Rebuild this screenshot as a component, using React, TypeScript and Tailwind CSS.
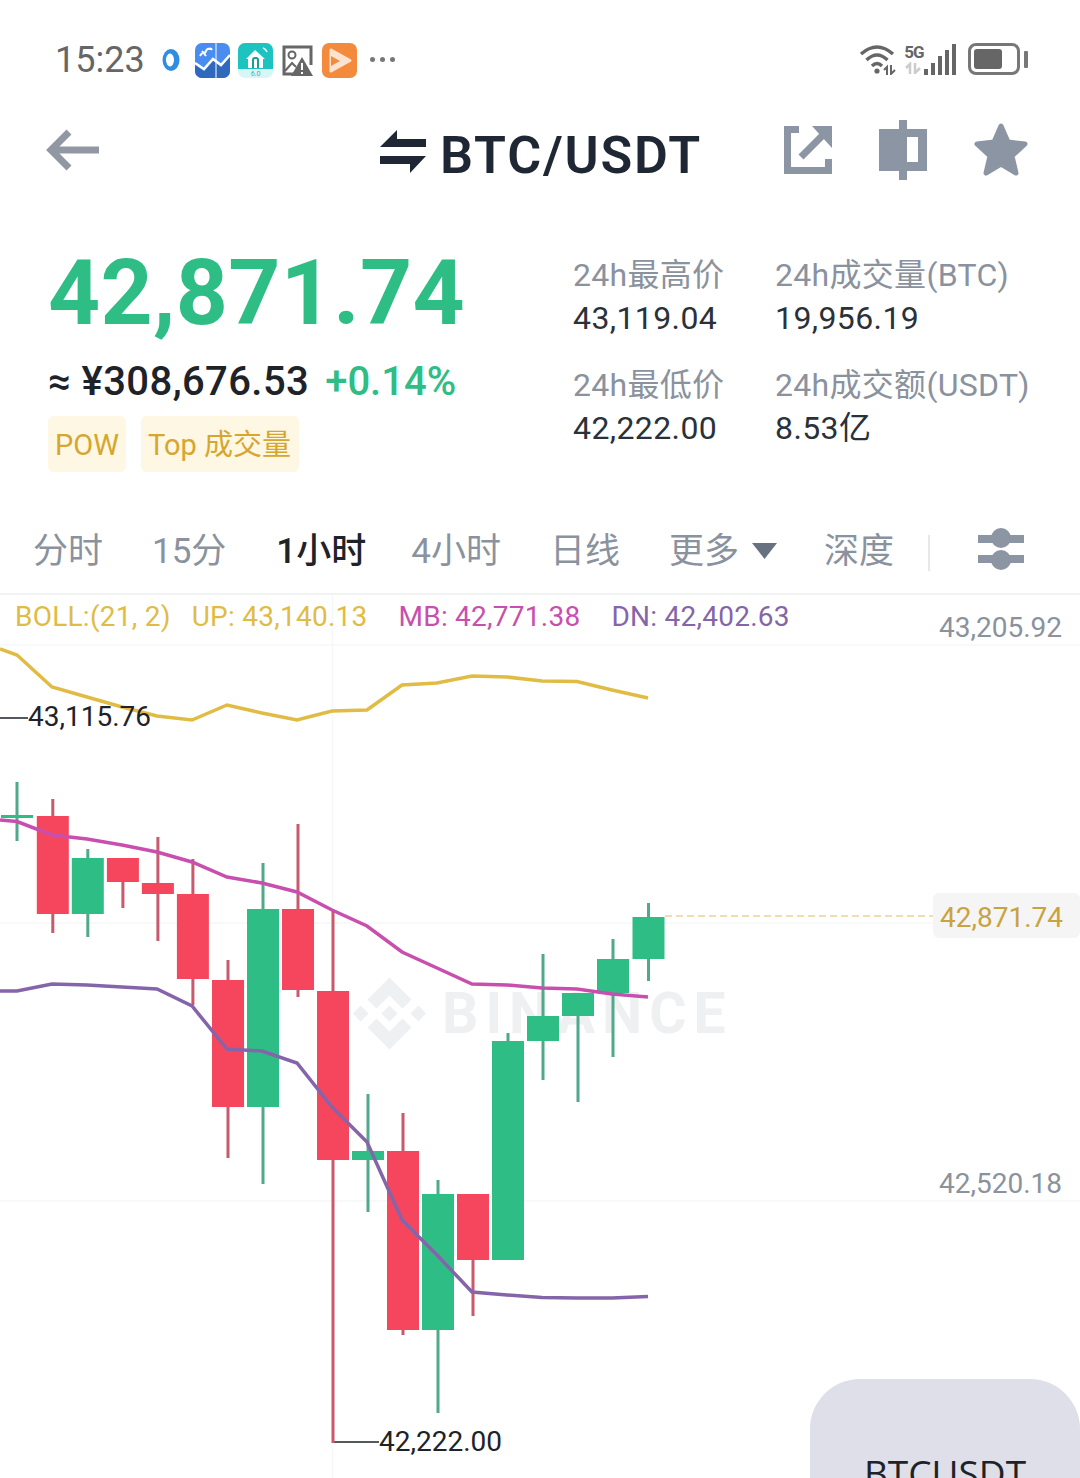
const candles = [
  { x: 17, hi: 782, lo: 841, top: 815, bot: 818, up: true },
  { x: 52.8, hi: 799, lo: 933, top: 816, bot: 914, up: false },
  { x: 87.8, hi: 849, lo: 937, top: 858, bot: 914, up: true },
  { x: 122.9, hi: 858, lo: 908, top: 858, bot: 882, up: false },
  { x: 157.9, hi: 837, lo: 941, top: 883, bot: 894, up: false },
  { x: 192.9, hi: 859, lo: 1005, top: 894, bot: 979, up: false },
  { x: 228, hi: 960, lo: 1158, top: 980, bot: 1107, up: false },
  { x: 263, hi: 863, lo: 1184, top: 909, bot: 1107, up: true },
  { x: 298, hi: 824, lo: 997, top: 909, bot: 990, up: false },
  { x: 333, hi: 910, lo: 1443, top: 991, bot: 1160, up: false },
  { x: 368, hi: 1094, lo: 1212, top: 1151, bot: 1160, up: true },
  { x: 403, hi: 1113, lo: 1335, top: 1151, bot: 1330, up: false },
  { x: 438, hi: 1180, lo: 1413, top: 1194, bot: 1330, up: true },
  { x: 473, hi: 1194, lo: 1316, top: 1194, bot: 1260, up: false },
  { x: 508, hi: 1033, lo: 1260, top: 1041, bot: 1260, up: true },
  { x: 543, hi: 954, lo: 1080, top: 1016, bot: 1041, up: true },
  { x: 578, hi: 993, lo: 1102, top: 993, bot: 1016, up: true },
  { x: 613, hi: 939, lo: 1057, top: 959, bot: 993, up: true },
  { x: 648.5, hi: 903, lo: 981, top: 917, bot: 959, up: true },
];

const bollUp =
  "0,649 17,655 52,687 87,697 122,707 157,716 192,720 227,705 262,713 297,720 332,711 367,710 402,685 437,683 472,676 507,677 542,681 577,681.5 612,690 648,698";
const bollMid =
  "0,820 17,821.5 52,835 87,839 122,845 157,852 192,862 227,877 262,883 297,892 332,910 367,926 402,952 437,968 472,984 507,985 542,988 577,989 612,994 648,997";
const bollDn =
  "0,991 17,991 52,984 87,985 122,987 157,989 192,1006 227,1049 262,1051 297,1063 332,1107 367,1142 402,1220 437,1255 472,1292 507,1295 542,1297.5 577,1298 612,1298 648,1296.5";

function AppIcons() {
  return (
    <div className="flex items-center ml-[17px]">
      <svg width="18" height="24" viewBox="0 0 18 24">
        <ellipse cx="9" cy="12" rx="8.5" ry="11" fill="#2f8de4" />
        <ellipse cx="8" cy="12" rx="4" ry="6.5" fill="#fff" />
      </svg>
      <svg width="35" height="35" viewBox="0 0 35 35" className="ml-[15px]">
        <rect width="35" height="35" rx="7" fill="#4a8cf0" />
        <path d="M0 22 L9 28 L18 18 L26 24 L35 14 V28 a7 7 0 0 1 -7 7 H7 a7 7 0 0 1 -7 -7Z" fill="#2f69bd" />
        <path d="M0 20 L9 26 L18 16 L26 22 L35 12" fill="none" stroke="#fff" stroke-width="2.5" />
        <path d="M21 0 V35" stroke="#fff" stroke-width="1" />
        <path d="M5 13 q3 -5 5 -3 q2 -5 4 -4 q2 -1 3 1 M7 8 l4 5" fill="none" stroke="#fff" stroke-width="2" />
      </svg>
      <svg width="35" height="35" viewBox="0 0 35 35" className="ml-[8px]">
        <rect width="35" height="35" rx="7" fill="#d9f6f6" />
        <path d="M0 7 a7 7 0 0 1 7 -7 H28 a7 7 0 0 1 7 7 V26 H0Z" fill="#1cc3bf" />
        <path d="M17 7 L27 16 H25 V25 H10 V16 H8Z" fill="#fff" />
        <path d="M15 25 V17 a2 2 0 0 1 2 -2 h1 a2 2 0 0 1 2 2 V25" fill="none" stroke="#1a9c99" stroke-width="2" />
        <path d="M25 5 q3 1 4 4" fill="none" stroke="#fff" stroke-width="1.5" />
        <text x="17.5" y="33" fontSize="7" textAnchor="middle" fill="#35b8b5" fontFamily="Roboto, sans-serif">
          6.0
        </text>
      </svg>
      <svg width="31" height="31" viewBox="0 0 31 31" className="ml-[9px]">
        <path d="M18 29 H2 V2 H29 V20" fill="none" stroke="#666" stroke-width="3" />
        <circle cx="10" cy="10" r="3.5" fill="none" stroke="#666" stroke-width="2" />
        <path d="M3 26 L10 18 L14 22" fill="none" stroke="#666" stroke-width="2" />
        <path d="M20 12 L31 31 H9Z" fill="#666" />
        <path d="M20 18 V25 M20 27 V29" stroke="#fff" stroke-width="2" />
      </svg>
      <svg width="35" height="35" viewBox="0 0 35 35" className="ml-[9px]">
        <rect width="35" height="35" rx="7" fill="#f48a3c" />
        <path d="M9 7 L28 17.5 L9 28Z" fill="#fde3cf" stroke="#fde3cf" stroke-width="3" stroke-linejoin="round" />
        <path d="M9 13 L18 18 L9 23Z" fill="#f48a3c" />
      </svg>
      <div className="flex gap-[5px] ml-[13px] -mt-[2px]">
        <div className="w-[5px] h-[5px] rounded-full bg-[#777]" />
        <div className="w-[5px] h-[5px] rounded-full bg-[#777]" />
        <div className="w-[5px] h-[5px] rounded-full bg-[#777]" />
      </div>
    </div>
  );
}

function SystemIcons() {
  return (
    <div className="flex items-center -mt-[2px]">
      <svg width="38" height="32" viewBox="0 0 38 32">
        <path d="M2 11 Q18 -3 34 11" fill="none" stroke="#666" stroke-width="3.5" />
        <path d="M7.5 17 Q18 7 28.5 17" fill="none" stroke="#666" stroke-width="3.5" />
        <path d="M13 23 Q18 18 23 23" fill="none" stroke="#666" stroke-width="3.5" />
        <circle cx="18" cy="28" r="2.6" fill="#666" />
        <path d="M28 32 V24 L25 27 M32 22 V31 L36 27" fill="none" stroke="#666" stroke-width="2" />
      </svg>
      <div className="flex flex-col items-center ml-[8px] w-[18px]">
        <span className="text-[17px] leading-[17px] font-bold text-[#666] tracking-[-1px]">5G</span>
        <svg width="18" height="12" viewBox="0 0 18 12" className="mt-[1px]">
          <path d="M5 12 V2 L1 6 M10 1 V11 L15 6" fill="none" stroke="#ccc" stroke-width="2.5" />
        </svg>
      </div>
      <div className="flex items-end gap-[3px] h-[31px] ml-[1px]">
        <div className="w-[4px] h-[6px] bg-[#666]" />
        <div className="w-[4px] h-[12px] bg-[#666]" />
        <div className="w-[4px] h-[19px] bg-[#666]" />
        <div className="w-[4px] h-[25px] bg-[#666]" />
        <div className="w-[4px] h-[31px] bg-[#666]" />
      </div>
      <div className="flex items-center ml-[12px]">
        <div className="w-[52px] h-[32px] rounded-[8px] border-[3px] border-[#777] p-[3px] flex">
          <div className="w-[28px] h-full rounded-[3px] bg-[#666]" />
        </div>
        <div className="w-[4px] h-[17px] rounded-[1px] bg-[#777] ml-[4px]" />
      </div>
    </div>
  );
}

function NavBar() {
  return (
    <div className="h-[64px] flex items-center pl-[45px] pr-[52px]">
      <svg width="54" height="42" viewBox="0 0 54 42" className="-mt-[4px]">
        <path d="M54 21 H7 M24 3 L6 21 L24 39" fill="none" stroke="#9298a3" stroke-width="7" />
      </svg>
      <svg width="46" height="43" viewBox="380 133 46 43" className="ml-[281px] -mt-[2px]">
        <path d="M380 150 L397 133 V142 H426 V150Z M380 159 H426 L410 176 V167 H380Z" fill="#1e2733" />
      </svg>
      <span className="ml-[14px] mt-[8px] text-[52px] leading-none font-semibold text-[#1e2733] tracking-[1.8px]">BTC/USDT</span>
      <div className="ml-auto flex items-center gap-[47px] -mt-[4px]">
        <svg width="48" height="48" viewBox="783 126 48 48">
          <path d="M783 126 H798 V133 H790 V167 H824 V159 H831 V174 H783Z M811 126 H831 V148Z" fill="#8b95a3" />
          <path d="M823 134 L800 157" fill="none" stroke="#8b95a3" stroke-width="7" />
        </svg>
        <svg width="48" height="60" viewBox="879 120 48 60">
          <path d="M899 120 H907 V129 H927 V171 H907 V180 H899 V171 H879 V129 H899Z" fill="#8b95a3" />
          <rect x="907" y="137" width="11" height="25" fill="#fff" />
        </svg>
        <svg width="54" height="54" viewBox="0 0 54 54">
          <path
            d="M27 3 L34 19 L51 21 L38 33 L42 50 L27 41 L12 50 L16 33 L3 21 L20 19Z"
            fill="#8b95a3"
            stroke="#8b95a3"
            stroke-width="5"
            stroke-linejoin="round"
          />
        </svg>
      </div>
    </div>
  );
}

function Stat({ label, value }: { label: string; value: string }) {
  return (
    <div className="flex flex-col">
      <span className="text-[32px] leading-[44px] tracking-[0.3px] text-[#8a929e] whitespace-nowrap">{label}</span>
      <span className="text-[32px] leading-[42px] text-[#2b3139] tracking-[0.4px] whitespace-nowrap">{value}</span>
    </div>
  );
}

function MarketInfo() {
  return (
    <div className="h-[336px] flex">
      <div className="w-[573px] pl-[48px] pt-[54px]">
        <div className="text-[91px] leading-[110px] font-bold text-[#2ebd85] tracking-[0.3px]">42,871.74</div>
        <div className="flex items-center mt-[7px] h-[54px]">
          <span className="text-[40px] leading-none font-medium text-[#1e2329] tracking-[0.4px]">≈ ¥308,676.53</span>
          <span className="text-[40px] leading-none font-medium text-[#2ebd85] ml-[16px]">+0.14%</span>
        </div>
        <div className="flex gap-[15px] mt-[7px]">
          <div className="h-[56px] px-[7px] pt-[3px] flex items-center rounded-[6px] bg-[#fdf7e3] text-[29px] text-[#d6a62f]">POW</div>
          <div className="h-[56px] px-[7px] pt-[3px] pr-[8px] flex items-center rounded-[6px] bg-[#fdf7e3] text-[29px] text-[#d6a62f]">
            Top 成交量
          </div>
        </div>
      </div>
      <div className="pt-[69px] flex flex-col gap-[24px]">
        <div className="flex">
          <div className="w-[202px]">
            <Stat label="24h最高价" value="43,119.04" />
          </div>
          <Stat label="24h成交量(BTC)" value="19,956.19" />
        </div>
        <div className="flex">
          <div className="w-[202px]">
            <Stat label="24h最低价" value="42,222.00" />
          </div>
          <Stat label="24h成交额(USDT)" value="8.53亿" />
        </div>
      </div>
    </div>
  );
}

function Tabs() {
  return (
    <div className="h-[75px] flex items-center pl-[33px] pb-[8px] border-b-2 border-[#f1f2f4] text-[35px] text-[#8a929e] whitespace-nowrap">
      <span>分时</span>
      <span className="ml-[49px]">15分</span>
      <span className="ml-[50px] font-medium text-[#1e2329]">1小时</span>
      <span className="ml-[45px]">4小时</span>
      <span className="ml-[49px]">日线</span>
      <span className="ml-[49px]">更多</span>
      <svg width="25" height="16" viewBox="0 0 25 16" className="ml-[13px] -mt-[4px]">
        <path d="M0 0 H25 L12.5 16Z" fill="#67717f" />
      </svg>
      <span className="ml-[47px]">深度</span>
      <div className="w-[2px] h-[36px] bg-[#e6e8ea] ml-[34px]" />
      <svg width="46" height="44" viewBox="0 0 46 44" className="ml-[48px] -mt-[8px]">
        <rect y="8" width="46" height="8" fill="#8b95a3" />
        <rect y="28" width="46" height="8" fill="#8b95a3" />
        <circle cx="23" cy="11" r="10" fill="#8b95a3" />
        <circle cx="23" cy="33" r="10" fill="#8b95a3" />
      </svg>
    </div>
  );
}

function Chart() {
  return (
    <div className="relative flex-1 overflow-hidden">
      {/* watermark sits under the candles */}
      <div className="absolute left-[353px] top-[382px] flex items-center">
        <svg width="73" height="73" viewBox="-36.5 -36.5 73 73">
          <path
            d="M0 -36 L22 -14 L13 -5 L0 -18 L-13 -5 L-22 -14Z M0 36 L22 14 L13 5 L0 18 L-13 5 L-22 14Z M0 -8 L8 0 L0 8 L-8 0Z M-29 -8 L-21 0 L-29 8 L-36.5 0Z M29 -8 L36.5 0 L29 8 L21 0Z"
            fill="#eef0f1"
          />
        </svg>
        <span className="ml-[16px] text-[57px] leading-none font-bold tracking-[7px] text-[#eef0f1]">BINANCE</span>
      </div>

      <svg className="absolute inset-0" width="1080" height="883" viewBox="0 595 1080 883">
        <path d="M0 645 H1080 M0 923 H1080 M0 1201 H1080 M332.5 595 V1478" stroke="#f6f7f8" stroke-width="1.5" fill="none" />
        <path d="M665 916 H933" stroke="#f0dfae" stroke-width="2" strokeDasharray="7 4" fill="none" />
        <path d="M0 718 H28 M333 1442 H379" stroke="#1e2329" stroke-width="1.5" fill="none" />
        {candles.map((c) => (
          <g key={c.x}>
            <rect x={c.x - 1.5} y={c.hi} width="3" height={c.lo - c.hi} fill={c.up ? "#4fa98a" : "#c9596c"} />
            <rect x={c.x - 16} y={c.top} width="32" height={c.bot - c.top} fill={c.up ? "#2ebd85" : "#f6465d"} />
          </g>
        ))}
        <polyline points={bollUp} fill="none" stroke="#e0bc45" stroke-width="3.5" />
        <polyline points={bollMid} fill="none" stroke="#c84fae" stroke-width="3.5" />
        <polyline points={bollDn} fill="none" stroke="#8565a9" stroke-width="3.5" />
      </svg>

      {/* legend */}
      <div className="absolute left-[15px] top-[2px] flex items-center text-[28px] leading-[40px] tracking-[0.25px] whitespace-nowrap">
        <span className="text-[#e0bc45]">BOLL:(21, 2)</span>
        <span className="ml-[21px] text-[#e0bc45]">UP: 43,140.13</span>
        <span className="ml-[31px] text-[#c84fae]">MB: 42,771.38</span>
        <span className="ml-[31px] text-[#8565a9]">DN: 42,402.63</span>
      </div>

      {/* price labels */}
      <span className="absolute left-[28px] top-[104px] text-[28px] leading-[36px] text-[#1e2329]">43,115.76</span>
      <span className="absolute left-[379px] top-[829px] text-[28px] leading-[36px] text-[#1e2329]">42,222.00</span>
      <span className="absolute right-[18px] top-[15px] text-[28px] leading-[36px] text-[#8a929e]">43,205.92</span>
      <span className="absolute right-[18px] top-[571px] text-[28px] leading-[36px] text-[#8a929e]">42,520.18</span>
      <div className="absolute left-[933px] right-0 top-[298px] h-[45px] pl-[7px] pt-[5px] flex items-center rounded-[6px] bg-[#f5f5f5] text-[28px] text-[#c9a33d]">
        42,871.74
      </div>

      {/* floating symbol card, cut off by the bottom edge */}
      <div className="absolute left-[810px] top-[784px] w-[270px] h-[160px] rounded-[50px] bg-[#dedfe8] pt-[70px] text-center text-[37px] leading-[48px] font-['Open_Sans',sans-serif] text-[#1e2329]">
        BTCUSDT
      </div>
    </div>
  );
}

export default function App() {
  return (
    <div className="w-[1080px] h-[1478px] overflow-hidden bg-white flex flex-col font-['Roboto','Noto_Sans_CJK_SC',sans-serif]">
      {/* status bar */}
      <div className="h-[120px] flex items-center justify-between pl-[55px] pr-[52px] shrink-0">
        <div className="flex items-center">
          <span className="text-[36px] leading-none text-[#666]">15:23</span>
          <AppIcons />
        </div>
        <SystemIcons />
      </div>
      <NavBar />
      <MarketInfo />
      <Tabs />
      <Chart />
    </div>
  );
}
